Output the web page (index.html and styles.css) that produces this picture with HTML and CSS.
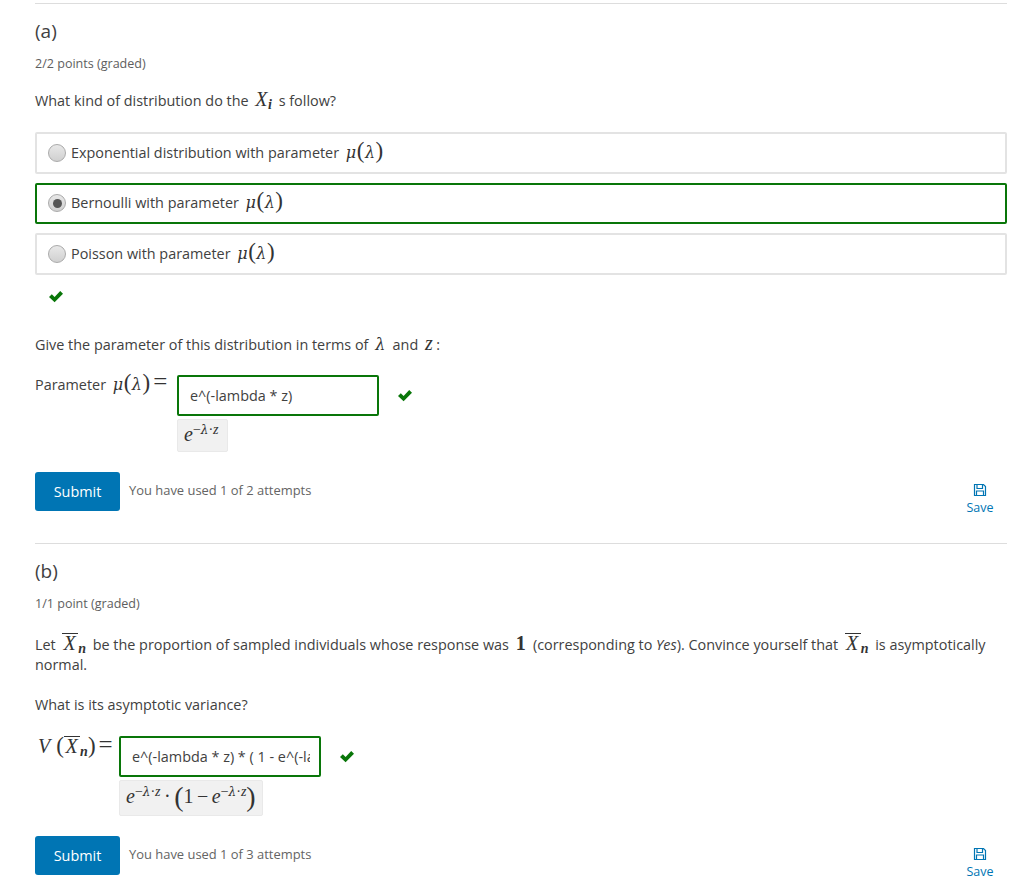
FILE: index.html
```html
<!DOCTYPE html>
<html lang="en">
<head>
    <meta charset="UTF-8">
    <title>Problem</title>
    <link rel="stylesheet" href="styles.css">
</head>
<body>

<div class="problem">
    <h3>(a)</h3>
    <div class="points">2/2 points (graded)</div>
    <p class="question">What kind of distribution do the <span class="math"><i>X</i><sub><i>i</i></sub></span> s follow?</p>

    <div class="option">
        <span class="radio"></span>
        <span>Exponential distribution with parameter <span class="math"><i class="greek">μ</i><span class="paren">(</span><i class="greek">λ</i><span class="paren">)</span></span></span>
    </div>
    <div class="option correct">
        <span class="radio checked"></span>
        <span>Bernoulli with parameter <span class="math"><i class="greek">μ</i><span class="paren">(</span><i class="greek">λ</i><span class="paren">)</span></span></span>
    </div>
    <div class="option">
        <span class="radio"></span>
        <span>Poisson with parameter <span class="math"><i class="greek">μ</i><span class="paren">(</span><i class="greek">λ</i><span class="paren">)</span></span></span>
    </div>
    <div class="option-check">
        <svg class="check" viewBox="0 0 16 13"><path d="M1 7l2.800-2.800 2.800 2.800L12.200 1 15 3.800 6.600 12.200z"/></svg>
    </div>

    <p class="question second">Give the parameter of this distribution in terms of <span class="math"><i class="greek">λ</i></span> and <span class="math"><i>z</i></span>:</p>

    <div class="answer-row">
        <div class="answer-label">Parameter <span class="math"><i class="greek">μ</i><span class="paren">(</span><i class="greek">λ</i><span class="paren">)</span> <span class="eq">=</span></span></div>
        <div>
            <div class="answer-line">
                <div class="text-input"><span class="input-value">e^(-lambda * z)</span></div>
                <svg class="check" viewBox="0 0 16 13"><path d="M1 7l2.800-2.800 2.800 2.800L12.200 1 15 3.800 6.600 12.200z"/></svg>
            </div>
            <div class="preview"><span class="math"><i>e</i><sup>−<i class="greek">λ</i>·<i>z</i></sup></span></div>
        </div>
    </div>

    <div class="actions">
        <button class="submit">Submit</button>
        <span class="attempts">You have used 1 of 2 attempts</span>
        <div class="save">
            <svg viewBox="0 0 14 14"><path d="M1.500 1.500h9l2 2v9h-11z M4 1.500v4h5.500v-4 M3.500 12.500v-4.500h7v4.500"/></svg>
            <span>Save</span>
        </div>
    </div>
</div>

<div class="problem">
    <h3>(b)</h3>
    <div class="points">1/1 point (graded)</div>
    <p class="question intro">Let <span class="math"><span class="bar"><i>X</i></span><sub><i>n</i></sub></span> be the proportion of sampled individuals whose response was <span class="math"><b>1</b></span> (corresponding to <em>Yes</em>). Convince yourself that <span class="math"><span class="bar"><i>X</i></span><sub><i>n</i></sub></span> is asymptotically normal.</p>
    <p class="question variance">What is its asymptotic variance?</p>

    <div class="answer-row wide">
        <div class="answer-label"><span class="math"><i>V</i> <span class="paren">(</span><span class="bar"><i>X</i></span><sub><i>n</i></sub><span class="paren">)</span> <span class="eq">=</span></span></div>
        <div>
            <div class="answer-line">
                <div class="text-input"><span class="input-value">e^(-lambda * z) * ( 1 - e^(-lambda * z) )</span></div>
                <svg class="check" viewBox="0 0 16 13"><path d="M1 7l2.800-2.800 2.800 2.800L12.200 1 15 3.800 6.600 12.200z"/></svg>
            </div>
            <div class="preview tall"><span class="math"><i>e</i><sup>−<i class="greek">λ</i>·<i>z</i></sup> · <span class="big">(</span>1 − <i>e</i><sup>−<i class="greek">λ</i>·<i>z</i></sup><span class="big">)</span></span></div>
        </div>
    </div>

    <div class="actions">
        <button class="submit">Submit</button>
        <span class="attempts">You have used 1 of 3 attempts</span>
        <div class="save">
            <svg viewBox="0 0 14 14"><path d="M1.500 1.500h9l2 2v9h-11z M4 1.500v4h5.500v-4 M3.500 12.500v-4.500h7v4.500"/></svg>
            <span>Save</span>
        </div>
    </div>
</div>

</body>
</html>
```

FILE: styles.css
```css
body {
    font-family: "Open Sans", Arial, sans-serif;
    font-size: 14.400px;
    line-height: 20px;
    color: #414141;
    background-color: #fff;
    margin: 0;
    padding: 3px 25px 0 35px;
    height: 887px;
    box-sizing: border-box;
    overflow: hidden;
}

.problem {
    border-top: 1px solid #ddd;
}

h3 {
    font-size: 19px;
    font-weight: 400;
    line-height: 24px;
    margin: 15px 0 0;
}

.points {
    font-size: 12.560px;
    line-height: 18px;
    color: #5e5e5e;
    margin-top: 12px;
}

.question {
    margin: 18px 0 0;
}

.question.second {
    margin-top: 28px;
}

.question.intro {
    margin-top: 20px;
}

.question.variance {
    margin-top: 20px;
}

.math {
    font-family: "Liberation Serif", "DejaVu Serif", serif;
    font-size: 20px;
    line-height: 0;
    letter-spacing: 0.500px;
    color: #333;
    margin: 0 3px;
    white-space: nowrap;
}

.math sub, .math sup {
    font-size: 14px;
    line-height: 0;
    letter-spacing: 0;
}

.math sub {
    vertical-align: -3px;
    font-weight: 700;
}

.math sup {
    vertical-align: 7px;
}

.paren {
    font-size: 23px;
}

.eq {
    font-size: 25px;
    margin-left: -3px;
}

.greek {
    font-family: "DejaVu Serif", serif;
    font-size: 16px;
}

sup .greek {
    font-size: 12px;
}

.bar {
    display: inline-block;
    border-top: 1px solid #333;
    line-height: 18px;
    padding: 0 2px 0 1px;
}

.option {
    display: flex;
    align-items: center;
    gap: 5px;
    height: 41.500px;
    box-sizing: border-box;
    border: 2px solid #e3e3e3;
    border-radius: 2px;
    padding-left: 11px;
    margin-top: 9px;
}

.question + .option {
    margin-top: 21px;
}

.option.correct {
    border-color: #097609;
}

.radio {
    width: 18px;
    height: 18px;
    box-sizing: border-box;
    border-radius: 50%;
    border: 1px solid #aaa;
    background: linear-gradient(#e8e8e8, #d0d0d0);
    flex-shrink: 0;
    display: flex;
    align-items: center;
    justify-content: center;
}

.radio.checked::after {
    content: "";
    width: 9px;
    height: 9px;
    border-radius: 50%;
    background-color: #555;
}

.option-check {
    padding-left: 13px;
    height: 22px;
    margin-top: 10.500px;
    display: flex;
    align-items: center;
}

.check {
    width: 16px;
    height: 13px;
    fill: #097609;
    flex-shrink: 0;
}

.answer-row {
    display: flex;
    margin-top: 20px;
}

.answer-row.wide {
    margin-top: 21px;
}

.answer-label {
    width: 142px;
    flex-shrink: 0;
}

.answer-row.wide .answer-label {
    width: 84px;
}

.answer-line {
    display: flex;
    align-items: center;
    gap: 18px;
}

.text-input {
    width: 202px;
    height: 41px;
    box-sizing: border-box;
    border: 2px solid #097609;
    border-radius: 2px;
    padding: 0 9px 0 11px;
    line-height: 37px;
}

.input-value {
    display: block;
    overflow: hidden;
    white-space: nowrap;
}

.preview {
    display: inline-block;
    background-color: #f1f1f1;
    border: 1px solid #e9e9e9;
    border-radius: 2px;
    margin-top: 3px;
    padding: 2px 8px 2px 6px;
    line-height: 27px;
}

.preview.tall {
    padding: 3px 6px 4px;
}

.preview .math {
    margin: 0;
    letter-spacing: 0;
    word-spacing: -1.500px;
}

.big {
    font-size: 28px;
    vertical-align: -3px;
}

.actions {
    display: flex;
    align-items: flex-start;
    margin-top: 20px;
    padding-bottom: 26px;
}

.submit {
    width: 85px;
    height: 39px;
    font-family: "Open Sans", Arial, sans-serif;
    font-size: 14.400px;
    font-weight: 500;
    color: #fff;
    background-color: #0075b4;
    border: none;
    border-radius: 3px;
    padding: 0;
}

.attempts {
    font-size: 12.930px;
    line-height: 18px;
    color: #646464;
    margin-left: 9px;
    margin-top: 9px;
}

.save {
    margin-left: auto;
    width: 54px;
    display: flex;
    flex-direction: column;
    align-items: center;
    gap: 2px;
    font-size: 12.500px;
    line-height: 18px;
    color: #0075b4;
    margin-top: 11px;
}

.save svg {
    width: 14px;
    height: 14px;
    fill: none;
    stroke: #0075b4;
    stroke-width: 1.200;
}
```
